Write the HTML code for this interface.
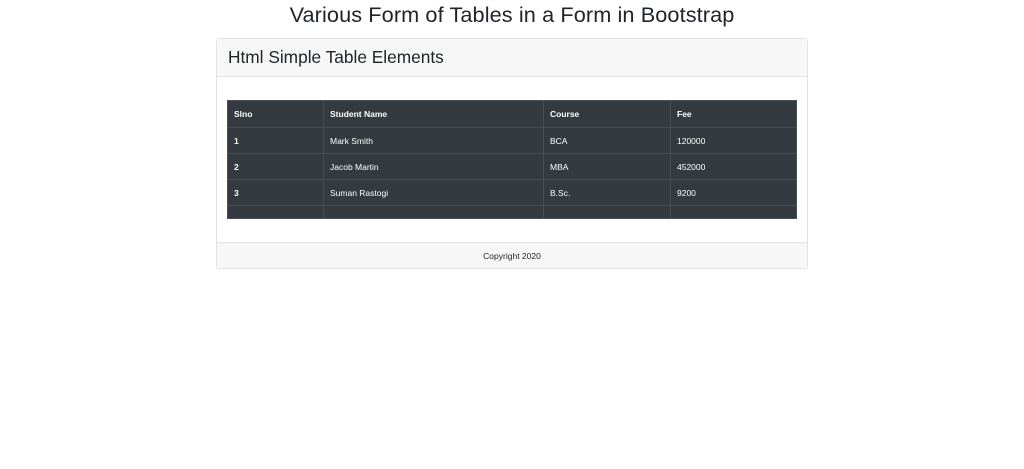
<!DOCTYPE html>
<html><head><style>
body{margin:0;background:#fff;font-family:"Liberation Sans",sans-serif;color:#212529;}
h1{margin:0;position:absolute;top:2px;left:0;width:1024px;text-align:center;font-size:21.7px;font-weight:500;line-height:26px;letter-spacing:0.1px;}
.card{position:absolute;left:216px;top:38px;width:590px;height:229px;border:1px solid #e3e3e3;border-radius:3px;}
.hd{height:37px;background:#f7f7f7;border-bottom:1px solid #e3e3e3;font-size:17.3px;font-weight:500;line-height:37px;padding-left:11px;}
table{position:absolute;left:10px;top:61px;width:570px;border-collapse:collapse;background:#343a40;color:#fff;font-size:8.5px;}
td,th{border:1px solid #454d55;text-align:left;padding:0 6px;height:25px;}
th{height:26px;}
tr.e td{height:12px;}
td.b{font-weight:bold;}
.ft{position:absolute;left:0;right:0;bottom:0;height:25px;background:#f7f7f7;border-top:1px solid #e3e3e3;text-align:center;font-size:8.5px;line-height:26px;}
</style></head><body>
<h1>Various Form of Tables in a Form in Bootstrap</h1>
<div class="card">
<div class="hd">Html Simple Table Elements</div>
<table>
<tr><th style="width:83px">Slno</th><th style="width:207px">Student Name</th><th style="width:114px">Course</th><th>Fee</th></tr>
<tr><td class="b">1</td><td>Mark Smith</td><td>BCA</td><td>120000</td></tr>
<tr><td class="b">2</td><td>Jacob Martin</td><td>MBA</td><td>452000</td></tr>
<tr><td class="b">3</td><td>Suman Rastogi</td><td>B.Sc.</td><td>9200</td></tr>
<tr class="e"><td></td><td></td><td></td><td></td></tr>
</table>
<div class="ft">Copyright 2020</div>
</div>
</body></html>
